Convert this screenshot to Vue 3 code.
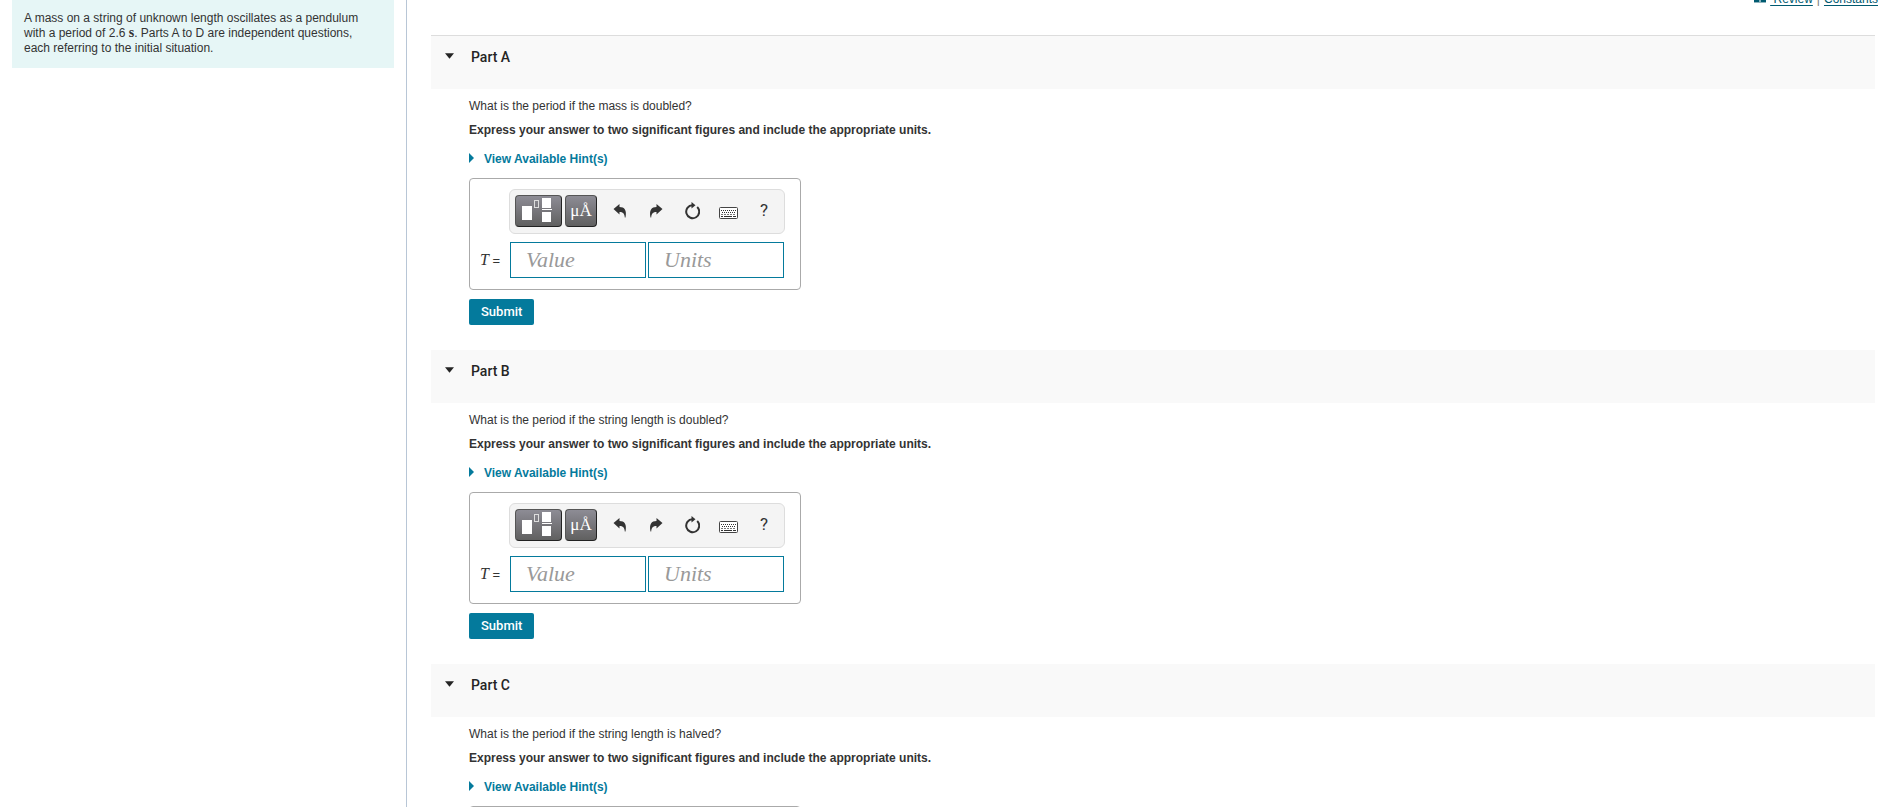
<script setup>
import { reactive } from 'vue'

const parts = reactive([
  { id: 'a', title: 'Part A', question: 'What is the period if the mass is doubled?', value: '', units: '' },
  { id: 'b', title: 'Part B', question: 'What is the period if the string length is doubled?', value: '', units: '' },
  { id: 'c', title: 'Part C', question: 'What is the period if the string length is halved?', value: '', units: '' },
])
</script>

<template>
  <div class="page">
    <aside class="side">
      <p class="intro">
        A mass on a string of unknown length oscillates as a pendulum with a period of 2.6
        <span class="unit">s</span>. Parts A to D are independent questions, each referring to the initial situation.
      </p>
    </aside>

    <main class="main">
      <nav class="links">
        <svg class="book" viewBox="0 0 12 10" aria-hidden="true">
          <path d="M0 0H5.500V9H0zM6.500 0H12V9H6.500z" fill="#005a70" />
          <path d="M5.500 0h1v9h-1zM0 9h12v1H0z" fill="#8fb4be" />
        </svg>
        <a href="#review" class="review">&nbsp;Review</a>
        <span class="bar">|</span>
        <a href="#constants">Constants</a>
      </nav>

      <section v-for="part in parts" :key="part.id" class="part">
        <h2 class="head">
          <button type="button" class="toggle">
            <svg class="caret" viewBox="0 0 10 6" aria-hidden="true"><path d="M0 0H10L5 6z" fill="#252525" /></svg>
            {{ part.title }}
          </button>
        </h2>

        <div class="body">
          <p class="question">{{ part.question }}</p>
          <p class="instructions">Express your answer to two significant figures and include the appropriate units.</p>
          <button type="button" class="hints">
            <svg class="arrow" viewBox="0 0 5 10" aria-hidden="true"><path d="M0 0L5 5L0 10z" fill="#047a9c" /></svg>
            View Available Hint(s)
          </button>

          <form class="answer" @submit.prevent>
            <div class="box">
              <div class="toolbar">
                <button type="button" class="dark templates" aria-label="Templates">
                  <svg width="46" height="30" viewBox="0 0 46 30" aria-hidden="true">
                    <path d="M6 10h10v14H6zM26 2h9v10h-9zM26 16h9v10h-9zM26 13h10v1H26z" fill="#fff" />
                    <rect x="18.500" y="4.500" width="4" height="7" fill="none" stroke="#ddd" />
                  </svg>
                </button>
                <button type="button" class="dark symbols" aria-label="Symbols">μÅ</button>
                <button type="button" class="tool" aria-label="Undo">
                  <svg width="14" height="14" viewBox="0 0 14 14" aria-hidden="true">
                    <path d="M0.500 5L6.500 0V3C11.500 3 14 6 12.500 13.500H11.800C11.500 9.500 10 8 6.500 8V10.500z" fill="#333" />
                  </svg>
                </button>
                <button type="button" class="tool" aria-label="Redo">
                  <svg width="14" height="14" viewBox="0 0 14 14" aria-hidden="true">
                    <path d="M13.500 5L7.500 0V3C2.500 3 0 6 1.500 13.500H2.200C2.500 9.500 4 8 7.500 8V10.500z" fill="#333" />
                  </svg>
                </button>
                <button type="button" class="tool" aria-label="Reset">
                  <svg width="16" height="18" viewBox="0 0 16 18" aria-hidden="true">
                    <path d="M13.200 5A6.500 6.500 0 1 1 8.500 3.200" fill="none" stroke="#333" stroke-width="2" />
                    <path d="M7.500 0L11.500 3.300L7.500 6.500z" fill="#333" />
                  </svg>
                </button>
                <button type="button" class="tool" aria-label="Keyboard">
                  <svg class="keys" width="19" height="12" viewBox="0 0 19 12" aria-hidden="true">
                    <rect x="0.500" y="0.500" width="18" height="11" rx="1" fill="#fff" stroke="#444" />
                    <path d="M2 3.500H17M3 5.500H16" stroke="#333" stroke-width="1" stroke-dasharray="1 1" />
                    <path d="M2 7.500H16" stroke="#777" stroke-dasharray="2 1" />
                    <path d="M2 9.500H4M5 9.500H13M14 9.500H17" stroke="#333" stroke-width="1" />
                  </svg>
                </button>
                <button type="button" class="tool help" aria-label="Help">?</button>
              </div>
              <div class="row">
                <label class="symbol" :for="'value-' + part.id"><i>T</i> =</label>
                <input :id="'value-' + part.id" v-model="part.value" type="text" placeholder="Value" />
                <input v-model="part.units" type="text" placeholder="Units" aria-label="Units" />
              </div>
            </div>
            <button type="submit" class="submit">Submit</button>
          </form>
        </div>
      </section>
    </main>
  </div>
</template>

<style>
body {
  background: #fff;
  overflow: hidden;
}
</style>

<style scoped>
* {
  box-sizing: border-box;
}
.page {
  display: flex;
  height: 100vh;
  overflow: hidden;
  font-family: "Liberation Sans", Arial, sans-serif;
  font-size: 12px;
  line-height: 15px;
  color: #333;
}
button {
  font: inherit;
  color: inherit;
  border: 0;
  padding: 0;
  background: none;
  cursor: pointer;
}
h2,
p {
  margin: 0;
}
.side {
  flex: 0 0 407px;
  padding: 0 12px;
  border-right: 1px solid #b8c6d6;
}
.intro {
  padding: 11px 24px 12px 12px;
  background: #e6f6f6;
}
.unit {
  font-family: "Liberation Serif", serif;
  font-size: 14px;
  line-height: 1;
  font-weight: bold;
}
.main {
  flex: 1;
  min-width: 0;
  padding: 0 10px 0 24px;
}
.links {
  display: flex;
  justify-content: flex-end;
  height: 35px;
  margin-right: -3px;
  line-height: 14px;
}
.links > * {
  height: 14px;
  margin-top: -8px;
}
.links a {
  color: #005a70;
  text-underline-offset: 2px;
}
.links .book {
  width: 12px;
  height: 10px;
  margin: -7px 4px 0 0;
}
.bar {
  padding: 0 4px;
  color: #777;
}
.part:first-of-type .head {
  border-top: 1px solid #ddd;
}
.head {
  padding: 13px 14px 24px;
  background: #f9f9f9;
  font-size: 14px;
  line-height: 16px;
  font-weight: 500;
}
.toggle {
  display: flex;
  align-items: center;
  gap: 17px;
  color: #252525;
  font-family: Roboto, sans-serif;
}
.caret {
  width: 9px;
  height: 6px;
  margin-bottom: 2px;
}
.body {
  padding: 10px 0 25px 38px;
}
.question {
  margin-bottom: 9px;
}
.instructions {
  margin-bottom: 14px;
  font-weight: bold;
}
.hints {
  display: flex;
  align-items: center;
  gap: 10px;
  margin-bottom: 11px;
  color: #047a9c;
  font-weight: bold;
}
.arrow {
  width: 5px;
  height: 10px;
  margin-bottom: 4px;
}
.answer {
  display: flex;
  flex-direction: column;
  align-items: flex-start;
  gap: 9px;
}
.box {
  width: 332px;
  padding: 10px 16px 11px 10px;
  border: 1px solid #aaa;
  border-radius: 4px;
}
.toolbar {
  display: flex;
  align-items: center;
  height: 45px;
  margin: 0 -1px 8px 29px;
  padding: 0 0 2px 5px;
  border: 1px solid #ddd;
  border-radius: 6px;
  background: #f4f4f4;
}
.dark {
  height: 32px;
  margin-right: 3px;
  border: 1px solid #555;
  border-right-color: #222;
  border-bottom-color: #222;
  border-radius: 4px;
  background: linear-gradient(#8d8c95, #606060);
  color: #fff;
}
.templates {
  width: 47px;
}
.templates svg,
.tool svg {
  display: block;
  margin: 0 auto;
}
.symbols {
  width: 32px;
  font-family: "Liberation Serif", serif;
  font-size: 17px;
}
.tool {
  width: 36px;
  height: 36px;
}
.symbols + .tool {
  margin-left: 2px;
}
.keys {
  position: relative;
  top: 2px;
}
.help {
  font-family: Roboto, sans-serif;
  font-size: 17px;
}
.row {
  display: flex;
  align-items: center;
  gap: 2px;
}
.symbol {
  width: 28px;
  font-size: 13px;
}
.symbol i {
  font-family: "Liberation Serif", serif;
  font-size: 16px;
}
input {
  flex: 1;
  min-width: 0;
  height: 36px;
  padding: 0 15px;
  border: 1px solid #047a9c;
  border-radius: 0;
  font-family: "Liberation Serif", serif;
  font-size: 22px;
  outline: 0;
}
input::placeholder {
  color: #999;
  font-style: italic;
  opacity: 1;
}
.submit {
  height: 26px;
  padding: 0 12px 2px;
  border-radius: 2px;
  background: #047a9c;
  color: #fff;
  font-family: Roboto, sans-serif;
  font-size: 13px;
  font-weight: 500;
}
</style>
